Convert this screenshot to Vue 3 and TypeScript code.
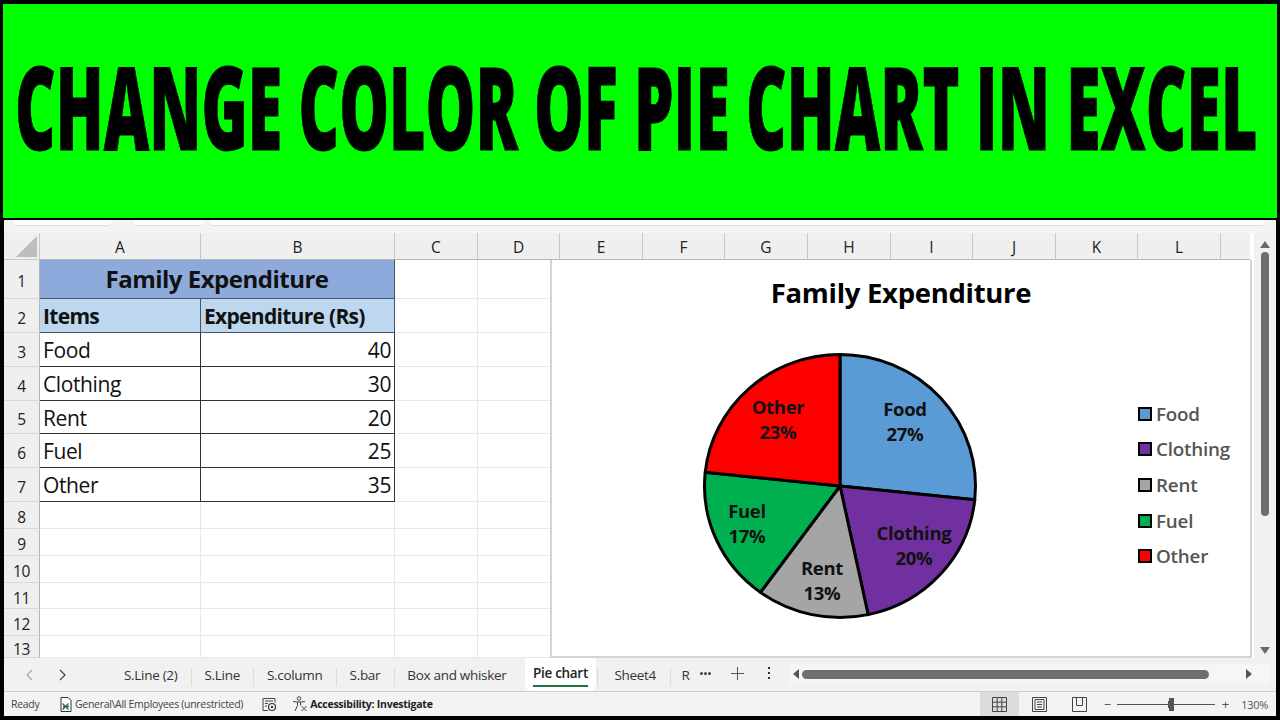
<template>
  <div class="screen">
    <header class="banner"><h1>CHANGE COLOR OF PIE CHART IN EXCEL</h1></header>

    <div class="excel">
      <div class="ribbon-rest">
        <span class="pill p1"></span><span class="pill p2"></span><span class="pill p3"></span>
      </div>

      <div class="sheet-main">
        <div class="sheet">
          <div class="grid">
            <div class="corner"><i></i></div>
            <div v-for="c in columns" :key="c" class="col-head">{{ c }}</div>
            <div class="col-head filler"></div>

            <template v-for="(r, i) in rowCount" :key="i">
              <div class="row-head">{{ i + 1 }}</div>
              <template v-if="i === 0">
                <div class="cell title-cell">Family Expenditure</div>
              </template>
              <template v-else-if="i === 1">
                <div class="cell head-cell">Items</div>
                <div class="cell head-cell">Expenditure (Rs)</div>
              </template>
              <template v-else-if="i < 7">
                <div class="cell data-cell">{{ items[i - 2].name }}</div>
                <div class="cell data-cell num">{{ items[i - 2].value }}</div>
              </template>
              <template v-else>
                <div class="cell blank"></div>
                <div class="cell blank"></div>
              </template>
              <div v-for="c in 10" :key="c" class="cell blank"></div>
              <div class="cell blank last"></div>
            </template>
          </div>

          <div class="chart">
            <div class="chart-title">Family Expenditure</div>
            <div class="chart-body">
              <svg class="pie" width="290" height="290" viewBox="-145 -145 290 290">
                <path v-for="s in slices" :key="s.name" :d="s.d" :fill="s.color" stroke="#000" stroke-width="3" stroke-linejoin="round" />
                <g v-for="s in slices" :key="s.name + '-l'" class="pie-label">
                  <text :x="s.lx" :y="s.ly">{{ s.name }}</text>
                  <text :x="s.lx" :y="s.ly + 25">{{ s.pct }}%</text>
                </g>
              </svg>
              <ul class="legend">
                <li v-for="s in slices" :key="s.name"><i :style="{ background: s.color }"></i>{{ s.name }}</li>
              </ul>
            </div>
          </div>
        </div>

        <div class="vscroll">
          <span class="arrow up"></span>
          <span class="vthumb"></span>
          <span class="arrow down"></span>
        </div>
      </div>

      <div class="tabs">
        <div class="tab-nav">
          <svg width="10" height="12" viewBox="0 0 10 12"><path d="M7 1 2 6l5 5" fill="none" stroke="#a6a6a6" stroke-width="1.2" /></svg>
          <svg width="10" height="12" viewBox="0 0 10 12"><path d="m3 1 5 5-5 5" fill="none" stroke="#444" stroke-width="1.2" /></svg>
        </div>
        <div class="tab-list">
          <span v-for="t in tabs" :key="t" class="tab" :class="{ active: t === 'Pie chart' }"><b>{{ t }}</b></span>
          <span class="tab cut">R</span>
        </div>
        <span class="more"><i></i><i></i><i></i></span>
        <svg class="plus" width="13" height="13" viewBox="0 0 13 13"><path d="M6.5 0v13M0 6.5h13" stroke="#555" stroke-width="1" /></svg>
        <span class="dots"><i></i><i></i><i></i></span>
        <div class="hscroll">
          <span class="tri left"></span>
          <span class="hthumb"></span>
          <span class="tri right"></span>
        </div>
      </div>

      <div class="status">
        <span class="ready">Ready</span>
        <svg class="s-doc" width="12" height="15" viewBox="0 0 12 15">
          <path d="M1 .5h7l3 3v11H1z" fill="#fff" stroke="#333" />
          <path d="M2.500 6.500l6 6M8.500 6.500l-6 6M3 9.500h6" stroke="#2b6a4b" stroke-width="1.400" />
        </svg>
        <span class="label">General\All Employees (unrestricted)</span>
        <svg class="s-macro" width="15" height="15" viewBox="0 0 15 15">
          <path d="M1 1.500h12M1 1.500v12h5M13 1.500v4M3 4h8M3 6.500h3M3 9h2" fill="none" stroke="#444" />
          <circle cx="10" cy="10" r="3.500" fill="none" stroke="#333" stroke-width="1.200" />
          <circle cx="10" cy="10" r="1.200" fill="#333" />
        </svg>
        <svg class="s-access" width="16" height="16" viewBox="0 0 16 16">
          <circle cx="7" cy="2.500" r="1.800" fill="none" stroke="#444" />
          <path d="M1 5.500 5 6h4l4-.5M5.500 6v3.500L3 15M8.500 6v3.500" fill="none" stroke="#444" />
          <path d="m9.500 10 5 5m0-5-5 5" stroke="#444" />
        </svg>
        <span class="label strong">Accessibility: Investigate</span>

        <div class="status-right">
          <span class="view on">
            <svg width="15" height="15" viewBox="0 0 15 15"><path d="M.5.500h14v14H.5zM5.200.500v14M9.800.500v14M.5 5.200h14M.5 9.800h14" fill="none" stroke="#444" /></svg>
          </span>
          <span class="view">
            <svg width="15" height="15" viewBox="0 0 15 15"><path d="M.5.500h14v14H.5z" fill="none" stroke="#444" /><path d="M3 2.500h9v10H3zM5 5h5M5 7.500h5M5 10h5" fill="none" stroke="#444" /></svg>
          </span>
          <span class="view">
            <svg width="15" height="15" viewBox="0 0 15 15"><path d="M.5.500h14v14H.5zM4.500.500v8h6v-8" fill="none" stroke="#444" /></svg>
          </span>
          <span class="zoom-sign minus">−</span>
          <div class="slider"><span class="tick"></span><span class="knob"></span></div>
          <span class="zoom-sign">+</span>
          <span class="pct">130%</span>
        </div>
      </div>
    </div>
  </div>
</template>

<script setup lang="ts">
import { computed } from 'vue'

const columns = ['A', 'B', 'C', 'D', 'E', 'F', 'G', 'H', 'I', 'J', 'K', 'L']
const rowCount = 13
const tabs = ['S.Line (2)', 'S.Line', 'S.column', 'S.bar', 'Box and whisker', 'Pie chart', 'Sheet4']

const items = [
  { name: 'Food', value: 40, color: '#5b9bd5', lx: 65, ly: -70 },
  { name: 'Clothing', value: 30, color: '#7030a0', lx: 74, ly: 54 },
  { name: 'Rent', value: 20, color: '#a5a5a5', lx: -18, ly: 89 },
  { name: 'Fuel', value: 25, color: '#00b050', lx: -93, ly: 32 },
  { name: 'Other', value: 35, color: '#ff0000', lx: -62, ly: -72 },
]

const slices = computed(() => {
  const total = items.reduce((sum, it) => sum + it.value, 0)
  // the chart in the picture is a little squashed, so the pie is an ellipse
  const RX = 135.5
  const RY = 131.5
  let acc = 0
  return items.map((it) => {
    const a0 = (acc / total) * 2 * Math.PI
    acc += it.value
    const a1 = (acc / total) * 2 * Math.PI
    const x0 = RX * Math.sin(a0)
    const y0 = -RY * Math.cos(a0)
    const x1 = RX * Math.sin(a1)
    const y1 = -RY * Math.cos(a1)
    const large = a1 - a0 > Math.PI ? 1 : 0
    return {
      ...it,
      pct: Math.round((it.value / total) * 100),
      d: `M0 0L${x0.toFixed(2)} ${y0.toFixed(2)}A${RX} ${RY} 0 ${large} 1 ${x1.toFixed(2)} ${y1.toFixed(2)}Z`,
    }
  })
})
</script>

<style>
html, body { margin: 0; background: #000; }
</style>

<style scoped>
.screen {
  width: 1280px;
  height: 720px;
  box-sizing: border-box;
  padding: 4px 3px 4px 3px;
  background: #000;
  display: flex;
  flex-direction: column;
  overflow: hidden;
  font-family: "Open Sans", "Noto Sans", sans-serif;
  color: #111;
}
.banner {
  height: 214px;
  flex: none;
  background: #00ff00;
  border-bottom: 2px solid #000;
  display: flex;
  justify-content: center;
  overflow: hidden;
}
.banner h1 {
  margin: 18px 7px 0 0;
  flex: none;
  font-size: 116px;
  line-height: 166px;
  height: 166px;
  font-weight: 800;
  color: #000;
  white-space: nowrap;
  transform: scaleX(0.54);
  -webkit-text-stroke: 1px #000;
}
.excel {
  flex: 1;
  min-height: 0;
  margin: 0 1px 0 1px;
  background: #f1f1f1;
  display: flex;
  flex-direction: column;
}
.ribbon-rest {
  height: 13px;
  flex: none;
  display: flex;
  align-items: flex-start;
  padding-left: 9px;
  background: #f3f3f3;
}
.pill {
  height: 5px;
  background: #fff;
  border-radius: 0 0 4px 4px;
  box-shadow: 0 1px 0 #dedede;
}
.p1 { width: 99px; }
.p2 { width: 71px; margin-left: 21px; }
.p3 { width: 1055px; margin-left: 6px; }

.sheet-main { height: 425px; flex: none; display: flex; }
.sheet { position: relative; width: 1250px; flex: none; overflow: hidden; background: #fff; }
.grid {
  display: grid;
  grid-template-columns: 36px 161px 194px 83px 82px 83px 82px 83px 83px 82px 83px 82px 83px 29px;
  grid-template-rows: 27px 39px 34px 34px 34px 33px 34px 34px 27px 27px 27px 26px 27px 22px;
}
.corner { background: #efefef; position: relative; border-right: 1px solid #c8c8c8; border-bottom: 1px solid #c8c8c8; box-sizing: border-box; }
.corner i {
  position: absolute;
  right: 2px;
  bottom: 2px;
  width: 0;
  height: 0;
  border-left: 21px solid transparent;
  border-bottom: 21px solid #bdbdbd;
}
.col-head {
  background: #efefef;
  border-right: 1px solid #c8c8c8;
  border-bottom: 1px solid #b5b5b5;
  box-sizing: border-box;
  text-align: center;
  font-size: 15.500px;
  line-height: 28px;
  color: #222;
}
.filler { border-right: 0; }
.row-head {
  background: #efefef;
  border-right: 1px solid #b5b5b5;
  border-bottom: 1px solid #d8d8d8;
  box-sizing: border-box;
  text-align: center;
  font-size: 15.500px;
  line-height: 16px;
  letter-spacing: -0.3px;
  color: #222;
  display: flex;
  align-items: center;
  justify-content: center;
  padding-top: 4px;
}
.cell { box-sizing: border-box; min-width: 0; white-space: nowrap; }
.blank { border-right: 1px solid #e8e8e8; border-bottom: 1px solid #e8e8e8; }
.last { border-right: 0; }
.title-cell {
  grid-column: span 2;
  background: #8ea9db;
  border-bottom: 1px solid #44546a;
  border-right: 1px solid #44546a;
  font-weight: 700;
  font-size: 24px;
  letter-spacing: -0.5px;
  text-align: center;
  line-height: 38px;
}
.head-cell {
  background: #bdd7ee;
  border-right: 1px solid #44546a;
  border-bottom: 1px solid #44546a;
  font-weight: 700;
  font-size: 21px;
  letter-spacing: -0.7px;
  line-height: 35px;
  padding-left: 3px;
}
.data-cell {
  background: #fff;
  border-right: 1px solid #333;
  border-bottom: 1px solid #333;
  font-size: 21px;
  letter-spacing: -0.4px;
  line-height: 35px;
  padding: 0 3px;
}
.num { text-align: right; }

.chart {
  position: absolute;
  left: 546px;
  top: 27px;
  width: 702px;
  height: 398px;
  box-sizing: border-box;
  background: #fff;
  border-left: 2px solid #d4d4d4;
  border-right: 2px solid #d4d4d4;
  border-bottom: 2px solid #d4d4d4;
  display: flex;
  flex-direction: column;
}
.chart-title {
  font-size: 27.500px;
  font-weight: 700;
  letter-spacing: -0.3px;
  text-align: center;
  line-height: 36px;
  margin-top: 15px;
  color: #000;
}
.chart-body { display: flex; margin-top: 30px; }
.pie { margin-left: 143px; flex: none; }
.pie-label text {
  font-size: 18.500px;
  font-weight: 700;
  text-anchor: middle;
  fill: #111;
  letter-spacing: -0.3px;
}
.legend {
  list-style: none;
  margin: 60px 0 0 153px;
  padding: 0;
  display: flex;
  flex-direction: column;
  gap: 10.700px;
}
.legend li {
  display: flex;
  align-items: center;
  gap: 4px;
  height: 25px;
  font-size: 18.800px;
  font-weight: 600;
  color: #555;
  letter-spacing: -0.2px;
}
.legend i { width: 14px; height: 14px; border: 2px solid #000; box-sizing: border-box; }

.vscroll {
  flex: 1;
  background: #f1f1f1;
  position: relative;
  display: flex;
  flex-direction: column;
  align-items: center;
  padding: 8px 0 0 0;
}
.vthumb { width: 8px; height: 264px; background: #6e6e6e; border-radius: 4px; margin-top: 4px; }
.arrow { width: 0; height: 0; border-left: 5px solid transparent; border-right: 5px solid transparent; }
.arrow.up { border-bottom: 7px solid #6a6a6a; }
.arrow.down { position: absolute; bottom: 4px; border-top: 7px solid #6a6a6a; }

.tabs {
  height: 34px;
  flex: none;
  background: #f1f1f1;
  border-bottom: 1px solid #cfcfcf;
  box-sizing: border-box;
  display: flex;
  align-items: center;
  position: relative;
  font-size: 13.500px;
  color: #333;
}
.tab-nav { width: 106.500px; flex: none; display: flex; gap: 22px; padding-left: 21px; box-sizing: border-box; }
.tab-list { display: flex; align-items: stretch; height: 100%; }
.tab {
  padding: 0 13.500px;
  display: flex;
  align-items: center;
  letter-spacing: -0.3px;
  position: relative;
}
.tab b { font-weight: 400; }
.tab + .tab::before {
  content: "";
  position: absolute;
  left: 0;
  top: 10px;
  height: 18px;
  width: 1px;
  background: #dcdcdc;
}
.tab.active {
  background: #fff;
  border-radius: 0 0 6px 6px;
  padding: 0 8px;
  margin: 0 5px 0 5px;
}
.tab.active::before { display: none; }
.tab.active + .tab::before { left: -4px; }
.tab.active b {
  color: #222;
  font-weight: 600;
  border-bottom: 2px solid #217346;
  padding-bottom: 3px;
  margin-top: 1px;
}
.cut { padding: 0 0 0 12px; }
.more { position: absolute; left: 696px; top: 14px; display: flex; gap: 1px; }
.more i { width: 3px; height: 3px; border-radius: 50%; background: #444; }
.plus { position: absolute; left: 727px; top: 9px; }
.dots { position: absolute; left: 764px; top: 9px; display: flex; flex-direction: column; gap: 3px; }
.dots i { width: 2px; height: 2px; background: #333; }
.hscroll { position: absolute; left: 785px; right: 6px; top: 6px; height: 20px; background: #f6f6f6; display: flex; align-items: center; border-radius: 4px; }
.hthumb { position: absolute; left: 13px; width: 407px; height: 9px; background: #6e6e6e; border-radius: 5px; }
.tri { position: absolute; width: 0; height: 0; border-top: 5px solid transparent; border-bottom: 5px solid transparent; }
.tri.left { left: 4px; border-right: 6px solid #555; }
.tri.right { right: 18px; border-left: 6px solid #555; }

.status {
  height: 24px;
  flex: none;
  display: flex;
  align-items: center;
  background: #f3f3f3;
  font-size: 10.500px;
  color: #444;
  letter-spacing: -0.3px;
}
.ready { margin-left: 7px; width: 49px; }
.s-doc { margin-right: 3px; }
.s-macro { margin-left: 19px; }
.s-access { margin-left: 15px; margin-right: 2px; }
.strong { font-weight: 700; color: #222; letter-spacing: -0.25px; }
.status-right { margin-left: auto; display: flex; align-items: center; height: 100%; }
.view { width: 39px; height: 100%; display: flex; align-items: center; justify-content: center; }
.view.on { background: #dcdcdc; }
.view + .view { margin-left: 1px; }
.zoom-sign { font-size: 13px; width: 12px; text-align: center; color: #555; }
.minus { margin-left: 2px; }
.slider { width: 98px; height: 1px; background: #555; position: relative; margin: 0 4px; }
.tick { position: absolute; left: 51px; top: -3px; width: 1px; height: 7px; background: #555; }
.knob { position: absolute; left: 52px; top: -6px; width: 5px; height: 13px; background: #555; }
.pct { margin: 0 8px 0 10px; font-size: 11px; color: #555; }
</style>
